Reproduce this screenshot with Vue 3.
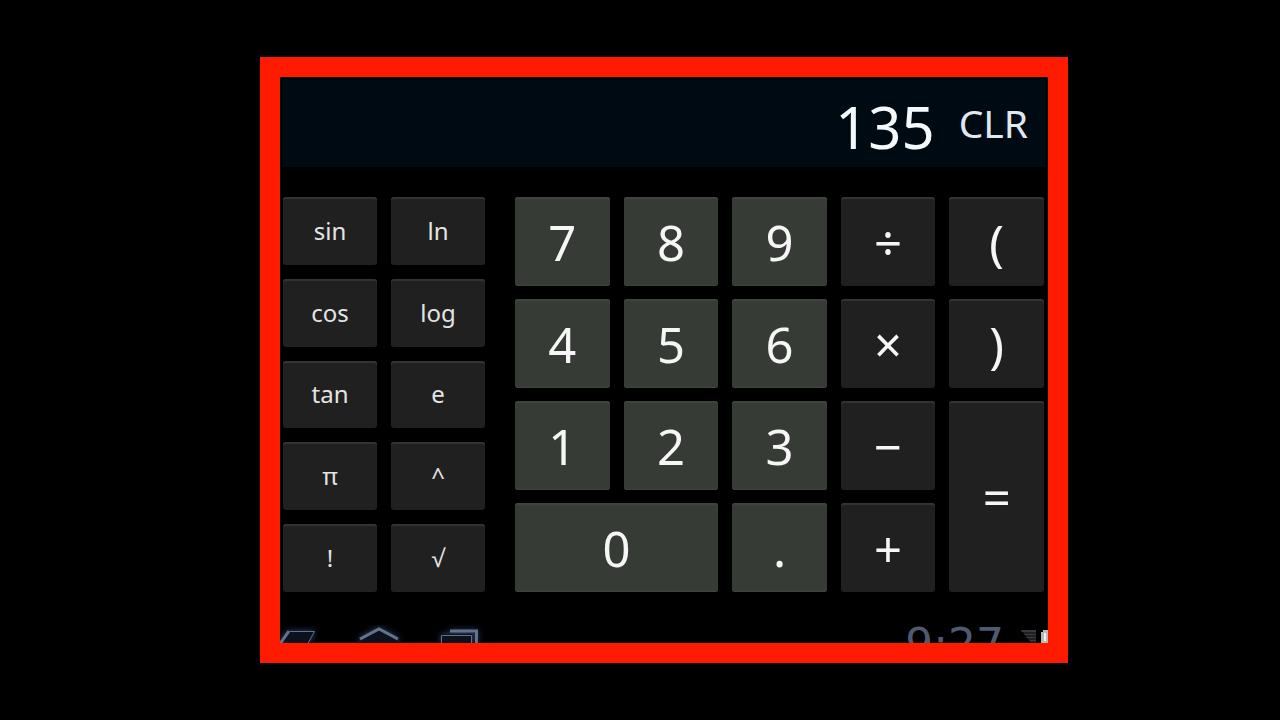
<script setup>
import { ref } from 'vue'

const entry = ref('135')
const functions = ['sin', 'ln', 'cos', 'log', 'tan', 'e', 'π', '^', '!', '√']
const keys = [
  { label: '7', digit: true }, { label: '8', digit: true }, { label: '9', digit: true }, { label: '÷' }, { label: '(' },
  { label: '4', digit: true }, { label: '5', digit: true }, { label: '6', digit: true }, { label: '×' }, { label: ')' },
  { label: '1', digit: true }, { label: '2', digit: true }, { label: '3', digit: true }, { label: '−' }, { label: '=', tall: true },
  { label: '0', digit: true, wide: true }, { label: '.', digit: true }, { label: '+' },
]
</script>

<template>
  <div class="page">
    <main class="frame">
      <header class="display">
        <output class="entry">{{ entry }}</output>
        <button class="clear" type="button">CLR</button>
      </header>

      <section class="pads">
        <div class="functions">
          <button v-for="f in functions" :key="f" class="key small" type="button">{{ f }}</button>
        </div>
        <div class="numbers">
          <button
            v-for="k in keys"
            :key="k.label"
            type="button"
            class="key"
            :class="{ digit: k.digit, tall: k.tall, wide: k.wide }"
          >{{ k.label }}</button>
        </div>
      </section>

      <footer class="system">
        <nav class="nav">
          <button type="button" class="nav-button" aria-label="Back">
            <svg width="48" height="20" viewBox="0 0 48 20">
              <path class="fill" d="M10 6H35L28 20H0Z" />
              <path class="thin" d="M10 6.500H34.500L27 20" />
              <path class="thick" d="M9 6L0 19" />
            </svg>
          </button>
          <button type="button" class="nav-button home" aria-label="Home">
            <svg width="48" height="20" viewBox="0 0 48 20">
              <path class="fill" d="M5 16L24 5L43 16V20H5Z" />
              <path class="thick" d="M5 14L24 4L43 14" />
            </svg>
          </button>
          <button type="button" class="nav-button recent" aria-label="Recent apps">
            <svg width="48" height="20" viewBox="0 0 48 20">
              <path class="fill" d="M5 9H36V20H5Z" />
              <path class="thick" d="M14 6H40.500V20" />
              <path class="thin" d="M5.500 20V10.500H35.500V20" />
            </svg>
          </button>
        </nav>
        <div class="status">
          <time class="clock">9:27</time>
          <svg class="indicators" width="28" height="20" viewBox="0 0 28 20">
            <path class="signal-back" d="M1 5H16V19H12Z" />
            <path class="signal" d="M1 5H16V7H2Z M4 9H16V10H5Z M6 12H16V13H7Z M9 15H16V16H10Z" />
            <path class="battery" d="M21 7H23V5H28V20H21Z" />
            <path class="level" d="M24 8H26V16H24Z" />
          </svg>
        </div>
      </footer>
    </main>
  </div>
</template>

<style>
body {
  background: #000;
}
</style>

<style scoped>
.page {
  box-sizing: border-box;
  min-height: 100vh;
  padding: 57px 212px 57px 260px;
  display: flex;
  background: #000;
  font-family: "Noto Sans", "Open Sans", sans-serif;
}

.frame {
  flex: 1;
  min-width: 0;
  display: flex;
  flex-direction: column;
  border: 20px solid #ff1b00;
  background: #000;
}

button {
  margin: 0;
  padding: 0;
  border: 0;
  background: none;
  color: inherit;
  font: inherit;
}

.display {
  height: 88px;
  margin: 2px 2px 0;
  padding-right: 18px;
  display: flex;
  align-items: center;
  justify-content: flex-end;
  gap: 24px;
  background: #000a12;
  color: #f4f9fc;
}

.entry {
  padding-top: 8px;
  font-size: 58px;
  line-height: 80px;
}

.clear {
  color: #dfe8ef;
  font-size: 39px;
  line-height: 88px;
}

.pads {
  flex: 1;
  display: flex;
  gap: 30px;
  padding: 30px 4px 33px 3px;
}

.functions,
.numbers {
  display: grid;
  min-width: 0;
}

.functions {
  flex: 202 1 0;
  grid-template-columns: repeat(2, 1fr);
  grid-template-rows: repeat(5, 1fr);
  gap: 14px;
}

.numbers {
  flex: 529 1 0;
  grid-template-columns: repeat(5, 1fr);
  grid-template-rows: repeat(4, 1fr);
  gap: 13px 14px;
}

.key {
  display: flex;
  align-items: center;
  justify-content: center;
  border-radius: 3px;
  background: #202020;
  box-shadow: inset 0 2px 1px #343434;
  color: #f6f6f6;
  font-size: 49px;
  line-height: 60px;
}

.digit {
  background: #363b36;
  box-shadow: inset 0 2px 1px #404540, inset 0 -1px 1px #414641;
}

.small {
  color: #e4e4e4;
  font-size: 24px;
  line-height: 32px;
}

.tall {
  grid-column: 5;
  grid-row: 3 / span 2;
}

.wide {
  grid-column: span 2;
}

.system {
  height: 18px;
  display: flex;
  justify-content: space-between;
  overflow: hidden;
}

.nav,
.status {
  display: flex;
  align-items: flex-start;
}

.nav {
  gap: 26px;
}

.nav-button {
  width: 48px;
  height: 20px;
}

.nav-button svg,
.indicators {
  display: block;
}

.nav-button svg {
  filter: drop-shadow(0 0 3px #29466e);
}

.home {
  margin-left: 1px;
}

.recent {
  margin-left: 7px;
}

.fill {
  fill: #0b121e;
}

.thin,
.thick {
  fill: none;
  stroke: #65728a;
}

.thin {
  stroke-width: 1;
}

.thick {
  stroke-width: 3;
}

.status {
  gap: 16px;
}

.clock {
  color: #505a6e;
  font-family: "DejaVu Sans", sans-serif;
  font-size: 44px;
  line-height: 40px;
}

.signal-back {
  fill: #1d1f23;
}

.signal {
  fill: #383a3f;
}

.battery {
  fill: #b9b9b5;
}

.level {
  fill: #f1f1ec;
}
</style>
